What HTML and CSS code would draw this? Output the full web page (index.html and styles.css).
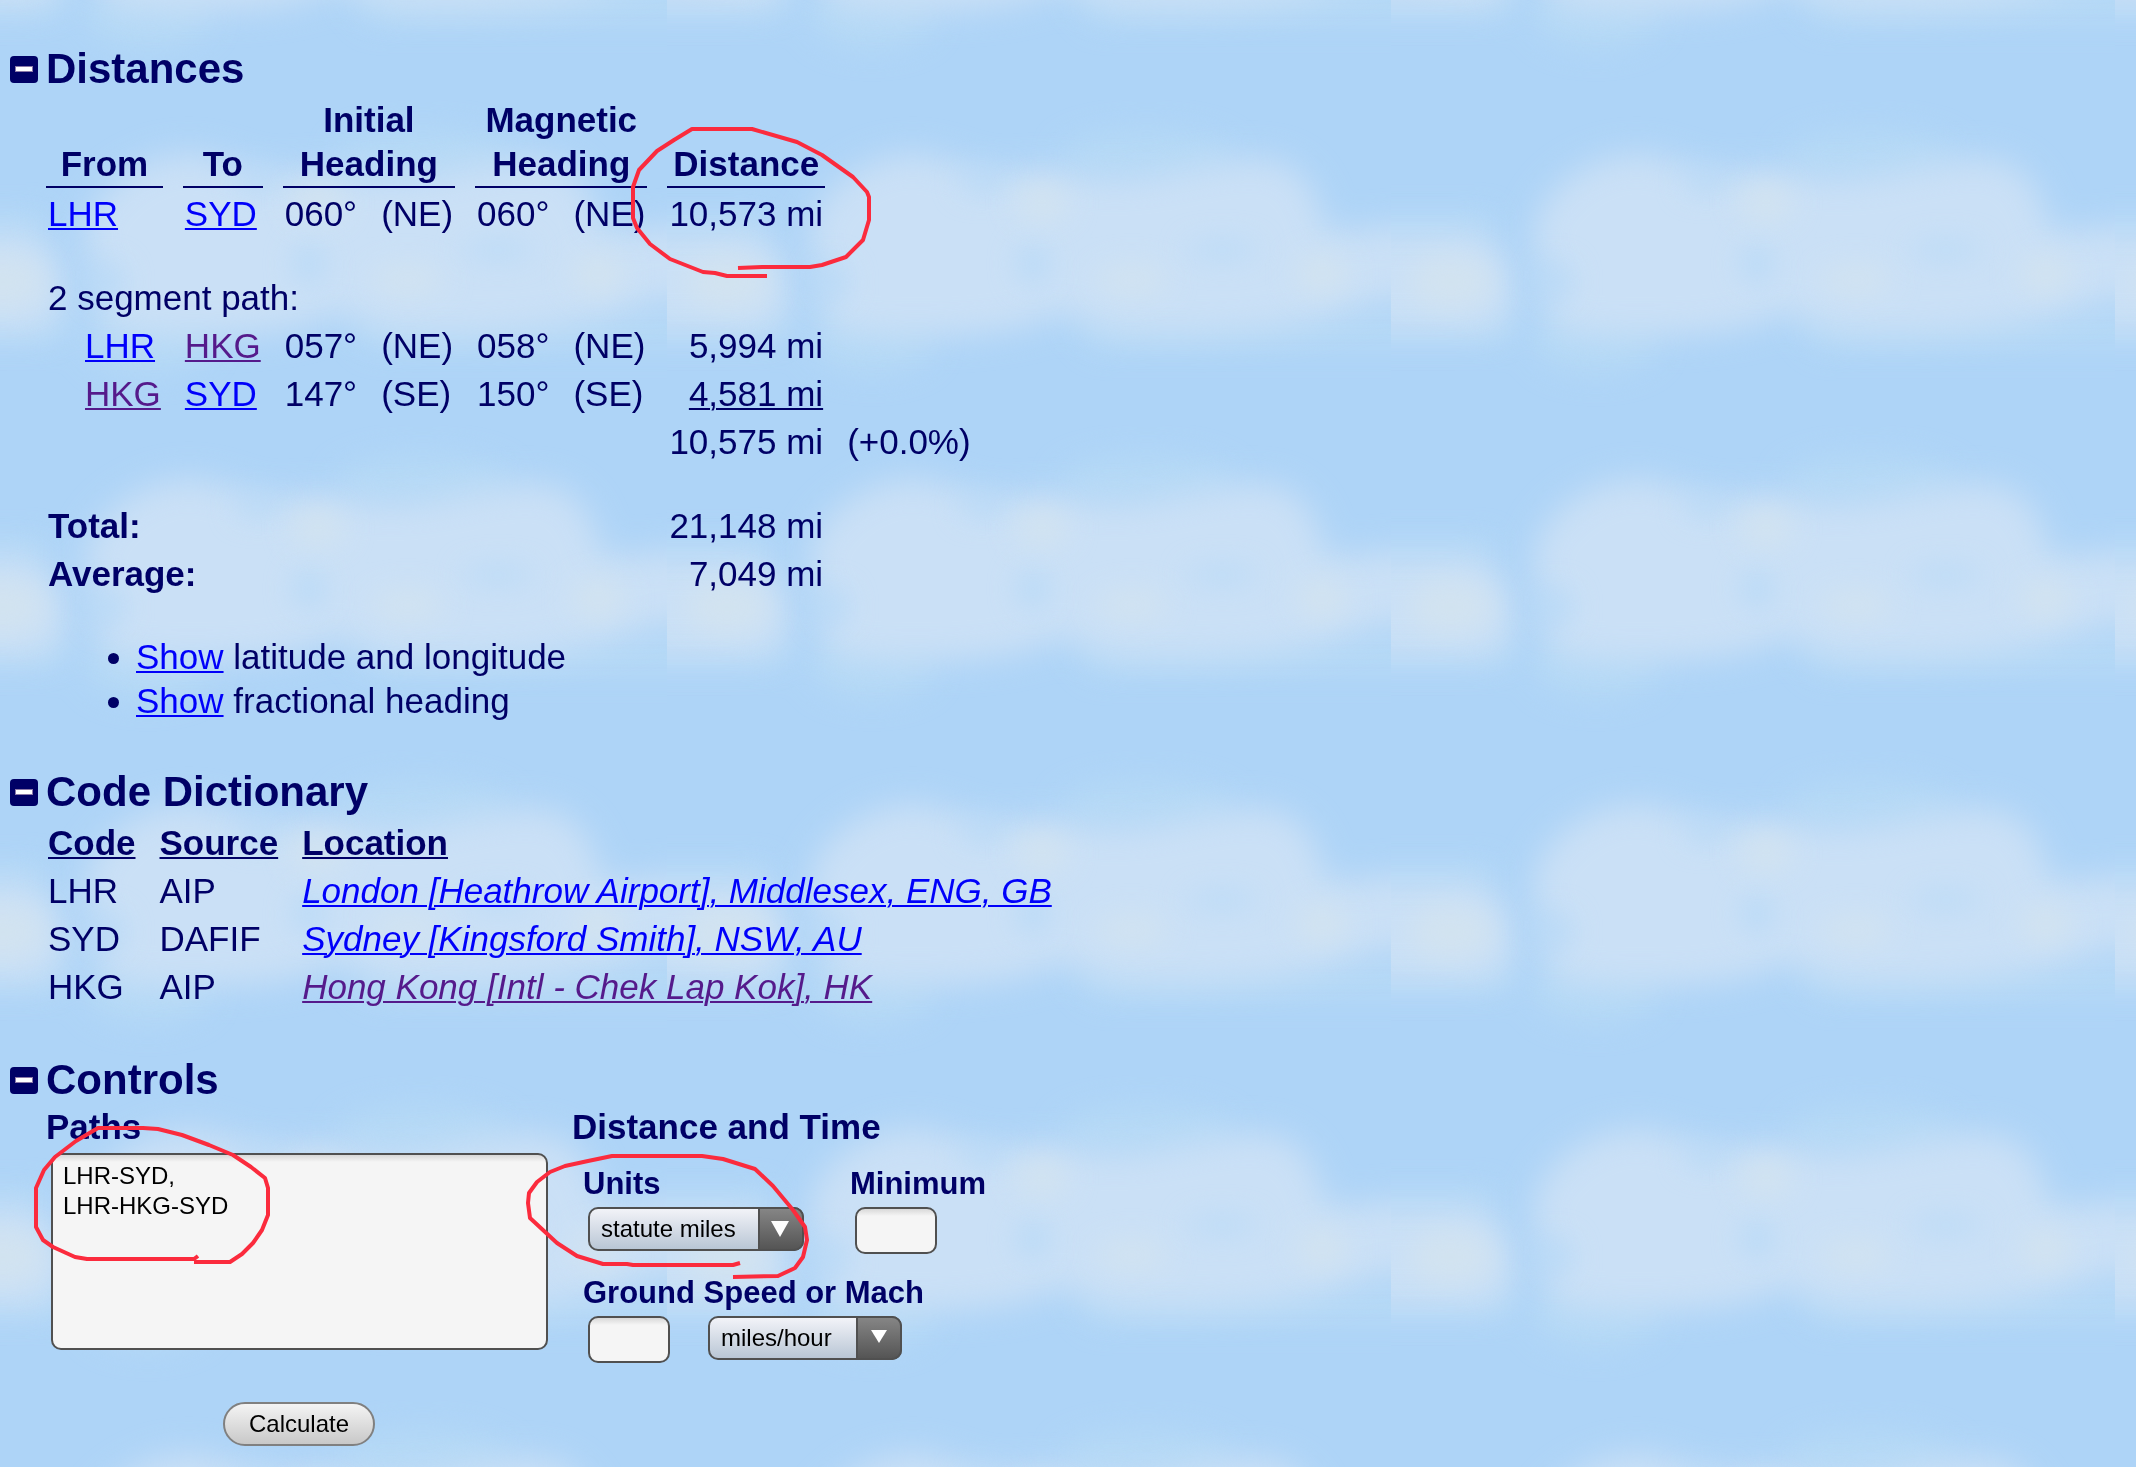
FILE: index.html
```html
<!DOCTYPE html>
<html lang="en">
<head>
    <meta charset="UTF-8">
    <title>Distances</title>
    <link rel="stylesheet" href="styles.css">
</head>
<body>
<svg class="sky" aria-hidden="true">
    <defs>
        <filter id="soft" x="-40%" y="-40%" width="180%" height="180%" color-interpolation-filters="sRGB">
            <feGaussianBlur stdDeviation="16"/>
        </filter>
        <filter id="softer" x="-100%" y="-100%" width="300%" height="300%" color-interpolation-filters="sRGB">
            <feGaussianBlur stdDeviation="14"/>
        </filter>
        <pattern id="clouds" width="724" height="325" patternUnits="userSpaceOnUse" patternTransform="translate(-57 100)">
            <rect width="724" height="325" fill="#aed4f7"/>
            <g filter="url(#softer)" fill="#b5d9f6">
                <ellipse cx="480" cy="56" rx="86" ry="26"/>
                <ellipse cx="205" cy="242" rx="62" ry="32"/>
                <path d="M400 215H760V248H430ZM-40 215H120V240H-40ZM-40 115H100V140H-40Z"/>
            </g>
            <g filter="url(#soft)" fill="#cae0f6">
                <path d="M142 138C142 98 190 56 245 54C280 54 300 74 345 74C380 64 400 74 440 78C500 78 530 60 590 58C634 60 652 90 658 130C690 130 715 128 780 120V196C700 200 690 210 650 220C600 234 500 238 440 232C415 222 395 210 385 216C350 238 250 238 190 234C160 232 155 220 152 202C172 180 142 165 142 138Z"/>
                <path d="M-40 132H90C115 150 126 180 122 210C115 228 100 232 80 232H-40Z"/>
            </g>
            <g filter="url(#softer)" fill="#b9daf7">
                <ellipse cx="366" cy="164" rx="15" ry="20"/>
                <ellipse cx="165" cy="182" rx="16" ry="18"/>
                <ellipse cx="555" cy="150" rx="36" ry="8"/>
                <ellipse cx="315" cy="82" rx="22" ry="10"/>
            </g>
            <g filter="url(#softer)" fill="#d2e3f0">
                <ellipse cx="375" cy="103" rx="26" ry="18"/>
                <ellipse cx="465" cy="180" rx="36" ry="14"/>
                <ellipse cx="655" cy="174" rx="26" ry="20"/>
                <ellipse cx="60" cy="182" rx="42" ry="26"/>
            </g>
        </pattern>
    </defs>
    <rect width="100%" height="100%" fill="url(#clouds)"/>
</svg>

<main>
    <section>
        <h2>
            <svg class="toggle" viewBox="0 0 28 27"><rect width="28" height="27" rx="4"/><path d="M5 10H23V16H5Z" fill="#8a78a8"/><path d="M6 11H22V15H6Z" fill="#fff"/></svg>
            Distances
        </h2>
        <table class="distances">
            <thead>
            <tr>
                <th><span>From</span></th>
                <th><span>To</span></th>
                <th colspan="2"><span>Initial<br>Heading</span></th>
                <th colspan="2"><span>Magnetic<br>Heading</span></th>
                <th><span>Distance</span></th>
            </tr>
            </thead>
            <tbody>
            <tr>
                <td><a href="#">LHR</a></td>
                <td><a href="#">SYD</a></td>
                <td>060°</td>
                <td>(NE)</td>
                <td>060°</td>
                <td>(NE)</td>
                <td class="num">10,573 mi</td>
                <td></td>
            </tr>
            <tr class="gap"><td colspan="8"></td></tr>
            <tr><td colspan="8">2 segment path:</td></tr>
            <tr>
                <td class="leg"><a href="#">LHR</a></td>
                <td><a href="#" class="seen">HKG</a></td>
                <td>057°</td>
                <td>(NE)</td>
                <td>058°</td>
                <td>(NE)</td>
                <td class="num">5,994 mi</td>
                <td></td>
            </tr>
            <tr>
                <td class="leg"><a href="#" class="seen">HKG</a></td>
                <td><a href="#">SYD</a></td>
                <td>147°</td>
                <td>(SE)</td>
                <td>150°</td>
                <td>(SE)</td>
                <td class="num"><u>4,581 mi</u></td>
                <td></td>
            </tr>
            <tr>
                <td colspan="6"></td>
                <td class="num">10,575 mi</td>
                <td>(+0.0%)</td>
            </tr>
            <tr class="gap"><td colspan="8"></td></tr>
            <tr>
                <td colspan="6"><b>Total:</b></td>
                <td class="num">21,148 mi</td>
                <td></td>
            </tr>
            <tr>
                <td colspan="6"><b>Average:</b></td>
                <td class="num">7,049 mi</td>
                <td></td>
            </tr>
            </tbody>
        </table>
        <ul>
            <li><a href="#">Show</a> latitude and longitude</li>
            <li><a href="#">Show</a> fractional heading</li>
        </ul>
    </section>

    <section>
        <h2>
            <svg class="toggle" viewBox="0 0 28 27"><rect width="28" height="27" rx="4"/><path d="M5 10H23V16H5Z" fill="#8a78a8"/><path d="M6 11H22V15H6Z" fill="#fff"/></svg>
            Code Dictionary
        </h2>
        <table class="codes">
            <thead>
            <tr>
                <th><u>Code</u></th>
                <th><u>Source</u></th>
                <th><u>Location</u></th>
            </tr>
            </thead>
            <tbody>
            <tr>
                <td>LHR</td>
                <td>AIP</td>
                <td><a href="#"><i>London [Heathrow Airport], Middlesex, ENG, GB</i></a></td>
            </tr>
            <tr>
                <td>SYD</td>
                <td>DAFIF</td>
                <td><a href="#"><i>Sydney [Kingsford Smith], NSW, AU</i></a></td>
            </tr>
            <tr>
                <td>HKG</td>
                <td>AIP</td>
                <td><a href="#" class="seen"><i>Hong Kong [Intl - Chek Lap Kok], HK</i></a></td>
            </tr>
            </tbody>
        </table>
    </section>

    <section>
        <h2>
            <svg class="toggle" viewBox="0 0 28 27"><rect width="28" height="27" rx="4"/><path d="M5 10H23V16H5Z" fill="#8a78a8"/><path d="M6 11H22V15H6Z" fill="#fff"/></svg>
            Controls
        </h2>
        <form class="controls">
            <div class="paths">
                <label class="title" for="paths">Paths</label>
                <textarea id="paths">LHR-SYD,
LHR-HKG-SYD</textarea>
                <button type="button">Calculate</button>
            </div>
            <fieldset>
                <legend class="title">Distance and Time</legend>
                <div class="row units">
                    <div>
                        <label for="units">Units</label>
                        <span class="pick">
                            <select id="units"><option>statute miles</option></select>
                        </span>
                    </div>
                    <div>
                        <label for="minimum">Minimum</label>
                        <input type="text" id="minimum">
                    </div>
                </div>
                <label for="speed">Ground Speed or Mach</label>
                <div class="row speed">
                    <input type="text" id="speed">
                    <span class="pick small">
                        <select aria-label="Speed units"><option>miles/hour</option></select>
                    </span>
                </div>
            </fieldset>
        </form>
    </section>
</main>

<!-- red pen marks -->
<svg class="pen" width="900" height="1300" aria-hidden="true">
    <path d="M767 276H727L715 273L703 272L670 259L650 244L637 228L633 218V187L639 170L657 151L674 140L692 129H752L797 142L822 155L853 177L867 192L869 197V220L863 240L846 257L822 265L810 267H762L738 268"/>
    <path d="M198 1256L194 1259H87L75 1257L53 1247L43 1240L36 1227V1188L44 1170L55 1157L76 1141L98 1128H143L158 1129L182 1135L209 1145L233 1155L251 1167L265 1178L268 1188V1215L262 1230L253 1243L242 1254L230 1262H194"/>
    <path d="M740 1263L733 1265H633L627 1264H603L577 1256L557 1243L530 1218L528 1203L529 1193L537 1182L550 1172L565 1166L588 1161L612 1156H702L723 1159L755 1169L773 1186L793 1210L805 1227L807 1240L803 1257L795 1268L778 1276L733 1277"/>
</svg>
</body>
</html>
```
FILE: styles.css
```css
* {
    box-sizing: border-box;
}
body {
    margin: 0;
    position: relative;
    background: #aed4f7;
    color: #000066;
    font-family: "Liberation Sans", Arial, Helvetica, sans-serif;
    font-size: 35px;
    line-height: 44px;
}
.sky {
    position: fixed;
    top: 0;
    left: 0;
    width: 100%;
    height: 100%;
    z-index: -1;
}
.pen {
    position: absolute;
    top: 0;
    left: 0;
    fill: none;
    stroke: #fb2b3d;
    stroke-width: 4;
    stroke-linejoin: round;
    pointer-events: none;
}
main {
    padding: 42px 10px 10px;
}
section {
    margin-bottom: 42px;
}
section:last-child {
    margin-bottom: 0;
}
h2 {
    display: flex;
    align-items: center;
    gap: 8px;
    margin: 0;
    font-size: 42px;
    line-height: 54px;
}
.toggle {
    width: 28px;
    height: 27px;
    fill: #000066;
}
a, u {
    text-decoration: underline;
    text-decoration-thickness: 2px;
    text-underline-offset: 2px;
}
a {
    color: #0000fa;
}
a.seen {
    color: #551a8b;
}

table {
    border-collapse: separate;
}
td {
    padding: 2px;
    white-space: nowrap;
}
.distances {
    margin-left: 16px;
    border-spacing: 20px 0;
}
.distances th {
    padding: 2px 0;
    vertical-align: bottom;
}
.distances th span {
    display: block;
    border-bottom: 2px solid #000066;
}
.distances .gap td {
    height: 36px;
    padding: 0;
}
.distances .leg {
    padding-left: 39px;
}
.distances .num {
    text-align: right;
}
ul {
    margin: 37px 0 0;
    padding-left: 126px;
}

.codes {
    margin-left: 16px;
    border-spacing: 20px 0;
}
.codes th {
    padding: 2px;
    text-align: left;
}

.controls {
    display: flex;
    align-items: flex-start;
    gap: 24px;
    margin-left: 36px;
}
.title {
    display: block;
    padding: 0;
    font-size: 35px;
    font-weight: bold;
    line-height: 40px;
}
.paths textarea {
    display: block;
    width: 497px;
    height: 197px;
    margin: 6px 0 52px 5px;
    padding: 6px 10px;
    resize: none;
}
textarea, input, select, button {
    font: 24px/30px "Liberation Sans", Arial, Helvetica, sans-serif;
    color: #000;
}
textarea, input {
    border: 2px solid #505050;
    border-radius: 10px;
    background: linear-gradient(#d8d8d8, #f5f5f5 7px);
}
.paths button {
    display: block;
    width: 152px;
    height: 44px;
    margin-left: 177px;
    padding: 0;
    border: 2px solid #808080;
    border-radius: 22px;
    background: linear-gradient(#f4f4f4, #c8c8c8);
}
fieldset {
    min-width: 0;
    margin: 0;
    padding: 0;
    border: 0;
}
fieldset label {
    display: block;
    margin: 0 0 5px 11px;
    font-size: 31px;
    font-weight: bold;
    line-height: 36px;
}
.row {
    display: flex;
    align-items: flex-start;
}
.units {
    gap: 35px;
    margin: 19px 0 21px;
}
.speed {
    gap: 38px;
}
fieldset input {
    display: block;
    width: 82px;
    height: 47px;
    margin-left: 16px;
    padding: 0 10px;
}
.pick {
    display: block;
    position: relative;
    width: 216px;
    height: 44px;
    margin-left: 16px;
}
.pick select {
    display: block;
    width: 100%;
    height: 100%;
    padding: 0 50px 0 11px;
    border: 2px solid #505050;
    border-radius: 10px;
    appearance: none;
    background: linear-gradient(#f2f3f8, #b9c6d5);
}
/* dark end of the drop-down */
.pick::before {
    content: "";
    position: absolute;
    top: 0;
    right: 0;
    box-sizing: border-box;
    width: 46px;
    height: 44px;
    border: 2px solid #505050;
    border-radius: 0 10px 10px 0;
    background: linear-gradient(#858585, #555);
    pointer-events: none;
}
.pick::after {
    content: "";
    position: absolute;
    top: 14px;
    right: 15px;
    border: solid transparent;
    border-width: 16px 9px 0;
    border-top-color: #fff;
    pointer-events: none;
}
.pick.small {
    width: 194px;
    margin-left: 0;
}
.pick.small::after {
    border-width: 13px 8px 0;
}
```
